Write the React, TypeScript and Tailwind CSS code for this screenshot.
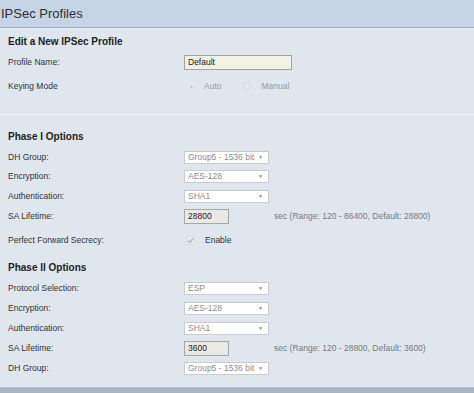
import React from "react";

const font = { fontFamily: '"Liberation Sans", Arial, sans-serif' };

function Select({ value }: { value: string }) {
  return (
    <div className="flex h-[13px] w-[85px] items-center justify-between border border-[#cbcbcb] bg-white pl-[3px] pr-[5px] text-[8.5px] leading-none text-[#8c8c8c]">
      <span>{value}</span>
      <span className="text-[5px] text-[#8a8a8a]">▼</span>
    </div>
  );
}

function Row({ label, h = "h-[20px]", children }: { label: string; h?: string; children?: React.ReactNode }) {
  return (
    <div className={`flex items-center ${h}`}>
      <div className="w-[176px] text-[8.5px] leading-none text-[#333]">{label}</div>
      <div className="flex items-center">{children}</div>
    </div>
  );
}

function Lifetime({ value, note }: { value: string; note: string }) {
  return (
    <>
      <div className="flex h-[15px] w-[45px] items-center border border-[#a8a8a8] bg-[#ebe9e3] pl-[3px] text-[8.5px] leading-none text-[#222]">
        {value}
      </div>
      <span className="ml-[45px] text-[8.5px] leading-none text-[#7a7a7a]">{note}</span>
    </>
  );
}

export default function App() {
  return (
    <div className="flex h-[393px] w-[474px] flex-col overflow-hidden bg-[#dfe6ee]" style={font}>
      <div className="flex h-[28px] shrink-0 items-center border-b border-[#9fadb9] bg-[#c5d5e6] pl-[1px]">
        <span className="text-[13px] leading-none text-[#2e2e2e]">IPSec Profiles</span>
      </div>
      <div className="flex flex-1 flex-col pl-[8px]">
        <div className="mt-[4px] flex h-[20px] items-center text-[10px] font-bold leading-none text-[#222]">
          Edit a New IPSec Profile
        </div>
        <Row label="Profile Name:">
          <div className="flex h-[15px] w-[108px] items-center border border-[#a3a3a3] bg-[#f3f1e3] pl-[3px] text-[8.5px] leading-none text-[#222]">
            Default
          </div>
        </Row>
        <Row label="Keying Mode" h="h-[28px]">
          <span className="ml-[3px] flex h-[8px] w-[8px] items-center justify-center rounded-full border border-[#dde2e8] bg-[#e8edf2]">
            <span className="h-[3px] w-[3px] rounded-full bg-[#c4c9cf]" />
          </span>
          <span className="ml-[9px] text-[8.5px] leading-none text-[#9a9a9a]">Auto</span>
          <span className="ml-[21px] h-[8px] w-[8px] rounded-full border border-[#d3d8de] bg-[#e4e9ef]" />
          <span className="ml-[11px] text-[8.5px] leading-none text-[#9a9a9a]">Manual</span>
        </Row>
        <div className="-ml-[8px] mt-[14px] h-px bg-[#edf1f5]" />
        <div className="mt-[11px] flex h-[21px] items-center text-[10px] font-bold leading-none text-[#222]">
          Phase I Options
        </div>
        <Row label="DH Group:"><Select value="Group5 - 1536 bit" /></Row>
        <Row label="Encryption:" h="h-[19px]"><Select value="AES-128" /></Row>
        <Row label="Authentication:"><Select value="SHA1" /></Row>
        <Row label="SA Lifetime:"><Lifetime value="28800" note="sec (Range: 120 - 86400, Default: 28800)" /></Row>
        <Row label="Perfect Forward Secrecy:" h="h-[28px]">
          <span className="ml-[2px] flex h-[9px] w-[9px] items-center justify-center rounded-[1px] border border-[#d6dbe0] bg-[#e9edf1]">
            <svg width="7" height="7" viewBox="0 0 7 7">
              <path d="M1 3.8 L2.8 5.5 L6 1.3" stroke="#a9aeb4" strokeWidth="1.2" fill="none" />
            </svg>
          </span>
          <span className="ml-[10px] text-[8.5px] leading-none text-[#333]">Enable</span>
        </Row>
        <div className="mt-[4px] flex h-[20px] items-center text-[10px] font-bold leading-none text-[#222]">
          Phase II Options
        </div>
        <Row label="Protocol Selection:"><Select value="ESP" /></Row>
        <Row label="Encryption:"><Select value="AES-128" /></Row>
        <Row label="Authentication:"><Select value="SHA1" /></Row>
        <Row label="SA Lifetime:"><Lifetime value="3600" note="sec (Range: 120 - 28800, Default: 3600)" /></Row>
        <Row label="DH Group:" h="h-[21px]"><Select value="Group5 - 1536 bit" /></Row>
      </div>
      <div className="h-[6px] shrink-0 border-t border-[#b6c2cc] bg-[#a9b6c1]" />
    </div>
  );
}
